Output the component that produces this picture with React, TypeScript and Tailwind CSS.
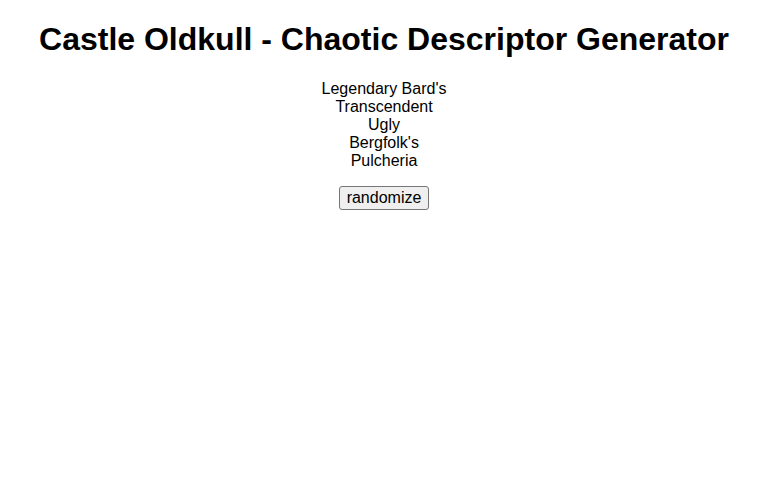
export default function App() {
  const words = ["Legendary Bard's", "Transcendent", "Ugly", "Bergfolk's", "Pulcheria"];
  return (
    <div className="text-center text-black bg-white min-h-[480px]" style={{ fontFamily: '"Liberation Sans", Arial, sans-serif' }}>
      <h1 className="text-[32px] font-bold leading-[normal] pt-[21.44px] mb-[21.44px]">
        Castle Oldkull - Chaotic Descriptor Generator
      </h1>
      <div className="text-base leading-[normal]">
        {words.map((w) => (
          <div key={w}>{w}</div>
        ))}
      </div>
      <button className="mt-[16px] text-base leading-[normal] px-[7px] py-[2px] bg-[#efefef] border border-[#767676] rounded-[3px] text-black">
        randomize
      </button>
    </div>
  );
}
